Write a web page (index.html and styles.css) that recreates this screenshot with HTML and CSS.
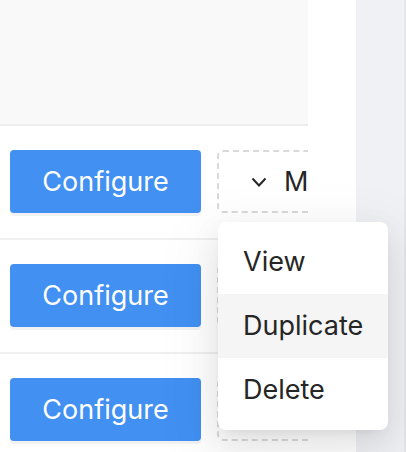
FILE: index.html
```html
<!DOCTYPE html>
<html lang="en">
<head>
  <meta charset="UTF-8">
  <meta name="viewport" content="width=device-width, initial-scale=1.0">
  <title>Configure list</title>
  <link rel="stylesheet" href="styles.css">
</head>
<body>
  <div class="page">
    <div class="main">
      <div class="header"></div>

      <div class="row">
        <button class="btn-primary">Configure</button>
        <div class="more">
          <svg class="chevron" width="16" height="10" viewBox="0 0 16 10"><polyline points="1.5,1.5 8,8.5 14.5,1.5" /></svg>
          <span>More</span>
        </div>
      </div>

      <div class="row">
        <button class="btn-primary">Configure</button>
        <div class="more">
          <svg class="chevron" width="16" height="10" viewBox="0 0 16 10"><polyline points="1.5,1.5 8,8.5 14.5,1.5" /></svg>
          <span>More</span>
        </div>
      </div>

      <div class="row">
        <button class="btn-primary">Configure</button>
        <div class="more">
          <svg class="chevron" width="16" height="10" viewBox="0 0 16 10"><polyline points="1.5,1.5 8,8.5 14.5,1.5" /></svg>
          <span>More</span>
        </div>
      </div>
    </div>

    <div class="gutter"></div>
    <div class="side"></div>

    <!-- menu aberto do primeiro "More" -->
    <ul class="menu">
      <li>View</li>
      <li class="active">Duplicate</li>
      <li>Delete</li>
    </ul>
  </div>
</body>
</html>
```

FILE: styles.css
```css
* {
  margin: 0;
  padding: 0;
  box-sizing: border-box;
  font-family: Inter, "Liberation Sans", Arial, sans-serif;
}

body {
  background-color: #fff;
  color: #262626;
  overflow: hidden;
}

.page {
  position: relative;
  display: flex;
  height: 452px;
}

.main {
  width: 308px;
  overflow: hidden;
  flex-shrink: 0;
}

.header {
  height: 126px;
  background-color: #f9f9f9;
  border-bottom: 2px solid #eeeeee;
}

.row {
  display: flex;
  align-items: flex-start;
  gap: 16px;
  height: 114px;
  padding: 24px 0 0 10px;
  border-bottom: 2px solid #f0f0f0;
}

.btn-primary {
  flex-shrink: 0;
  width: 191px;
  height: 63px;
  background-color: #4190f2;
  color: #fff;
  border: none;
  border-radius: 4px;
  font-size: 27px;
  box-shadow: 0 3px 0 rgba(0, 0, 0, 0.05);
}

.more {
  flex-shrink: 0;
  display: flex;
  align-items: center;
  gap: 17px;
  height: 63px;
  padding: 0 32px;
  border: 2px dashed #d9d9d9;
  border-radius: 6px;
  font-size: 27px;
  color: #262626;
}

.chevron polyline {
  fill: none;
  stroke: #262626;
  stroke-width: 2;
}

.gutter {
  width: 48px;
  flex-shrink: 0;
}

.side {
  width: 50px;
  flex-shrink: 0;
  background-color: #f0f1f5;
  border-right: 2px solid #e6e7ea;
}

.menu {
  position: absolute;
  left: 218px;
  top: 222px;
  width: 170px;
  padding: 8px 0;
  list-style: none;
  background-color: #fff;
  border-radius: 8px;
  box-shadow: 0 12px 32px rgba(0, 0, 0, 0.08),
              0 6px 12px -8px rgba(0, 0, 0, 0.12),
              0 18px 56px 16px rgba(0, 0, 0, 0.05);
}

.menu li {
  height: 64px;
  line-height: 64px;
  padding: 0 25px;
  font-size: 27px;
  color: #262626;
}

.menu li.active {
  background-color: #f5f5f5;
}
```
